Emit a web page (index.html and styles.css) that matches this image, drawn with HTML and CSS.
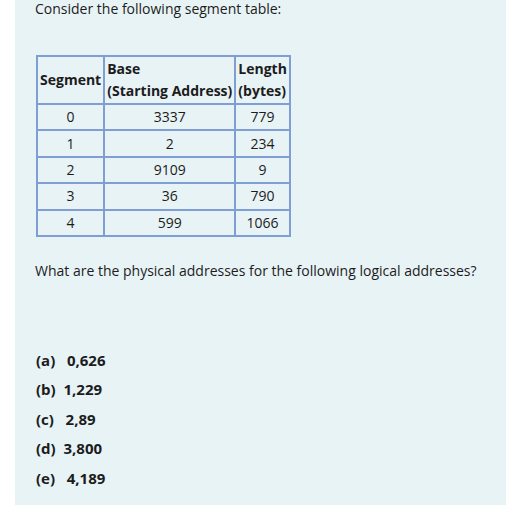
FILE: index.html
```html
<!DOCTYPE html>
<html>
<head>
<meta charset="utf-8">
<link rel="stylesheet" href="styles.css">
</head>
<body>
<div class="panel">
  <p class="intro">Consider the following segment table:</p>
  <table class="seg">
    <tr class="head">
      <th class="c1">Segment</th>
      <th class="c2 top">Base<br>(Starting Address)</th>
      <th class="c3 top">Length<br>(bytes)</th>
    </tr>
    <tr><td>0</td><td>3337</td><td>779</td></tr>
    <tr><td>1</td><td>2</td><td>234</td></tr>
    <tr><td>2</td><td>9109</td><td>9</td></tr>
    <tr><td>3</td><td>36</td><td>790</td></tr>
    <tr><td>4</td><td>599</td><td>1066</td></tr>
  </table>
  <p class="question">What are the physical addresses for the following logical addresses?</p>
  <ul class="answers">
    <li>(a)&nbsp;&nbsp; 0,626</li>
    <li>(b)&nbsp; 1,229</li>
    <li>(c)&nbsp;&nbsp; 2,89</li>
    <li>(d)&nbsp; 3,800</li>
    <li>(e)&nbsp;&nbsp; 4,189</li>
  </ul>
</div>
</body>
</html>
```

FILE: styles.css
```css
html, body {
  margin: 0;
  padding: 0;
  background: #ffffff;
}
body {
  font-family: "Open Sans", "Noto Sans", sans-serif;
  color: #1c1c1c;
}
.panel {
  margin-left: 15px;
  background: #e8f3f6;
  height: 505px;
  padding: 0 20px;
  box-sizing: border-box;
  overflow: hidden;
}
.intro {
  margin: 0;
  font-size: 14px;
  line-height: 18px;
}
.seg {
  margin-top: 37px;
  margin-left: 1px;
  border-collapse: collapse;
  border: 2px solid #7f9fd4;
  font-size: 14px;
}
.seg th, .seg td {
  border: 2px solid #7f9fd4;
  padding: 0 2px;
}
.seg th {
  font-weight: 700;
  text-align: left;
  line-height: 22px;
  height: 45px;
  vertical-align: middle;
}
.seg th.top {
  vertical-align: top;
  padding-top: 1px;
}
.seg td {
  text-align: center;
  height: 24.4px;
  line-height: 24px;
}
.question {
  margin: 25px 0 0 0;
  font-size: 14px;
  line-height: 17px;
}
.answers {
  list-style: none;
  margin: 72px 0 0 1px;
  padding: 0;
  font-size: 15px;
  font-weight: 700;
}
.answers li {
  line-height: 18px;
  margin-bottom: 11.4px;
}
```
